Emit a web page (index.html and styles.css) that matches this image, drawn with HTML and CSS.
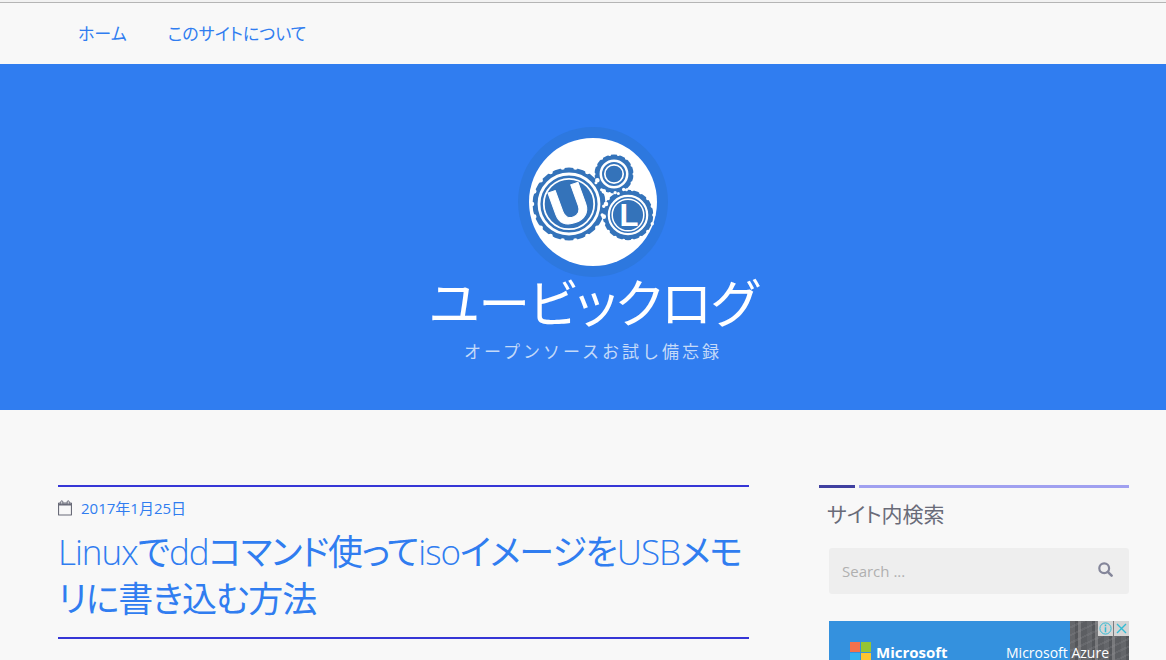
FILE: index.html
```html
<!DOCTYPE html>
<html lang="ja">
<head>
  <meta charset="UTF-8" />
  <meta name="viewport" content="width=device-width, initial-scale=1.0"/>
  <title>ユービックログ</title>
  <link rel="stylesheet" href="styles.css">
</head>
<body>

<nav class="nav">
  <a href="#">ホーム</a>
  <a href="#">このサイトについて</a>
</nav>

<header class="hero">
  <svg class="logo" viewBox="0 0 150 150" aria-hidden="true">
    <circle cx="75" cy="75" r="75" fill="#2d78df"/>
    <circle cx="75" cy="75" r="64" fill="#fff"/>
    <!-- gear bodies, notched by white dots round the edge -->
    <g fill="#3473ba">
      <circle cx="51" cy="77" r="36.5"/>
      <circle cx="96" cy="47" r="19.5"/>
      <circle cx="110" cy="88" r="25.3"/>
    </g>
    <g fill="none" stroke="#fff" stroke-linecap="round">
      <circle cx="51" cy="77" r="37" stroke-width="4.6" pathLength="180" stroke-dasharray="0 10"/>
      <circle cx="96" cy="47" r="20" stroke-width="3" pathLength="140" stroke-dasharray="0 10"/>
      <circle cx="110" cy="88" r="25.8" stroke-width="3.4" pathLength="180" stroke-dasharray="0 10"/>
    </g>
    <g fill="none" stroke="#fff">
      <circle cx="51" cy="77" r="30" stroke-width="2.8"/>
      <circle cx="51" cy="77" r="25.2" stroke-width="1.8"/>
      <circle cx="96" cy="47" r="13.2" stroke-width="2.5"/>
      <circle cx="96" cy="47" r="9.2" stroke-width="1.7"/>
      <circle cx="110" cy="88" r="19.2" stroke-width="2.2"/>
      <circle cx="110" cy="88" r="15.8" stroke-width="1.5"/>
    </g>
    <text class="logo-letter" x="51" y="96" font-size="53" stroke="#fff" transform="rotate(-20 51 77)">U</text>
    <text class="logo-letter" x="111" y="99" font-size="31">L</text>
  </svg>
  <h1 class="site-title">ユービックログ</h1>
  <p class="site-desc">オープンソースお試し備忘録</p>
</header>

<div class="content">
  <main class="posts">
    <article class="post">
      <div class="post-date">
        <svg width="14" height="16" viewBox="0 0 14 16" fill="none" stroke="#696b78" aria-hidden="true">
          <rect x="0.5" y="3" width="13" height="12" rx="0.5" stroke-width="1.2"/>
          <path d="M0.5 4.5h13" stroke-width="2"/>
          <rect x="2.8" y="0.8" width="2" height="3.4" rx="1" fill="#f8f8f8"/>
          <rect x="9.2" y="0.8" width="2" height="3.4" rx="1" fill="#f8f8f8"/>
        </svg>
        <a href="#">2017年1月25日</a>
      </div>
      <h2 class="post-title"><a href="#"><span>Linux</span>で<span>dd</span>コマンド使って<span>iso</span>イメージを<span>USB</span>メモリに書き込む方法</a></h2>
    </article>
  </main>

  <aside class="sidebar">
    <div class="bar"><span></span><span></span></div>
    <h3 class="widget-title">サイト内検索</h3>
    <form class="search">
      <input type="search" placeholder="Search ..." aria-label="サイト内検索">
      <button type="submit" aria-label="検索">
        <svg width="15" height="15" viewBox="0 0 15 15" fill="none" stroke="#84869a" aria-hidden="true">
          <circle cx="6.2" cy="6.2" r="4.9" stroke-width="2.2"/>
          <path d="M9.8 9.8l3.8 3.8" stroke-width="2.6" stroke-linecap="round"/>
        </svg>
      </button>
    </form>
    <div class="ad">
      <div class="ad-photo"></div>
      <div class="ad-row">
        <svg width="21" height="21" viewBox="0 0 21 21" aria-hidden="true">
          <path fill="#f3714c" d="M0 0h10v10H0z"/>
          <path fill="#95c533" d="M11 0h10v10H11z"/>
          <path fill="#35b1f0" d="M0 11h10v10H0z"/>
          <path fill="#fcc532" d="M11 11h10v10H11z"/>
        </svg>
        <b>Microsoft</b>
        <span>Microsoft Azure</span>
      </div>
      <div class="ad-choices">
        <button type="button" aria-label="広告について">
          <svg width="15" height="15" viewBox="0 0 15 15" fill="none" stroke="#33bcd4" aria-hidden="true">
            <circle cx="7.5" cy="7.5" r="5.6"/>
            <path d="M7.5 6.2v5M7.5 3.6v1.6" stroke-width="1.5"/>
          </svg>
        </button>
        <button type="button" aria-label="閉じる">
          <svg width="15" height="15" viewBox="0 0 15 15" fill="none" stroke="#33bcd4" aria-hidden="true">
            <path d="M3 3l9 9M12 3l-9 9" stroke-width="1.4"/>
          </svg>
        </button>
      </div>
    </div>
  </aside>
</div>

</body>
</html>
```

FILE: styles.css
```css
* { box-sizing: border-box; }
body {
  margin: 0;
  height: 100vh;
  overflow: hidden;
  display: flex;
  flex-direction: column;
  font-family: 'Open Sans', 'Noto Sans CJK JP', sans-serif;
  font-feature-settings: "palt";
  font-size: 15px;
  background: #f8f8f8;
  color: #696b78;
  border-top: 2px solid #f2f2f2;
}
a {
  color: #307df0;
  text-decoration: none;
}
h1, h2, h3, p { margin: 0; }
.nav {
  display: flex;
  flex-shrink: 0;
  align-items: center;
  gap: 41px;
  height: 62px;
  padding: 0 78px 2px;
  border-top: 1px solid #b5b5b5;
  font-size: 17px;
}
.hero {
  display: flex;
  flex-direction: column;
  flex-shrink: 0;
  align-items: center;
  padding: 63px 38px 45px 58px;
  background: #307df0;
  color: #fff;
}
.logo {
  width: 150px;
  height: 150px;
  flex-shrink: 0;
}
.logo-letter {
  font-family: 'Liberation Sans', sans-serif;
  font-weight: bold;
  fill: #fff;
  text-anchor: middle;
}
.site-title {
  font-size: 52px;
  font-weight: 400;
  line-height: 52px;
  letter-spacing: -1px;
}
.site-desc {
  margin-top: 10px;
  font-feature-settings: normal;
  font-size: 17px;
  line-height: 26px;
  letter-spacing: 3px;
  color: #c4daf9;
}
.content {
  flex: 1;
  min-height: 0;
  display: flex;
  gap: 70px;
  padding: 75px 37px 0 58px;
}
.posts {
  flex: 1;
}
.post {
  border-top: 2px solid #3636d6;
  border-bottom: 2px solid #3636d6;
  padding: 9px 0 15px;
}
.post-date {
  display: flex;
  align-items: center;
  gap: 9px;
  line-height: 24px;
}
.post-title {
  margin-top: 8px;
  font-size: 35px;
  font-weight: 400;
  line-height: 47px;
  letter-spacing: -1px;
}
.post-title span { font-weight: 300; }
.sidebar {
  display: flex;
  flex-direction: column;
  width: 310px;
  flex-shrink: 0;
}
.bar {
  display: flex;
  gap: 4px;
}
.bar span {
  width: 36px;
  height: 3px;
  background: #4040a0;
}
.bar span + span {
  flex: 1;
  background: #a0a0f0;
}
.widget-title {
  padding: 11px 8px 0;
  font-size: 21px;
  font-weight: 400;
  line-height: 30px;
}
.search {
  display: flex;
  flex-shrink: 0;
  height: 46px;
  margin: 19px 0 27px 10px;
  background: #eee;
  border-radius: 3px;
}
.search input {
  flex: 1;
  min-width: 0;
  padding: 0 13px;
  border: none;
  background: none;
  font: inherit;
  outline: none;
}
.search input::placeholder { color: #b0b0b0; }
.search button {
  width: 48px;
  padding: 0;
  border: none;
  background: none;
  cursor: pointer;
}
.ad {
  position: relative;
  flex: 0 1 250px;
  min-height: 0;
  overflow: hidden;
  margin-left: 10px;
  background: #3491de;
  color: #fff;
}
.ad-photo {
  position: absolute;
  top: 0;
  right: 0;
  width: 59px;
  height: 100%;
  background:
    repeating-linear-gradient(155deg, transparent 0 5px, rgba(150, 150, 155, 0.2) 5px 7px),
    repeating-linear-gradient(90deg, #64666a 0 5px, #55575b 5px 8px, #78797c 8px 11px, #5c5e62 11px 17px);
}
.ad-row {
  position: relative;
  display: flex;
  align-items: center;
  padding: 21px 20px 0 21px;
  font-size: 14px;
  line-height: 21px;
}
.ad-row b {
  margin-left: 5px;
  font-size: 15px;
}
.ad-row span { margin-left: auto; }
.ad-choices {
  position: absolute;
  top: 0;
  right: 0;
  display: flex;
  gap: 1px;
}
.ad-choices button {
  display: flex;
  padding: 0;
  border: none;
  background: #d5d5d5;
}
```
